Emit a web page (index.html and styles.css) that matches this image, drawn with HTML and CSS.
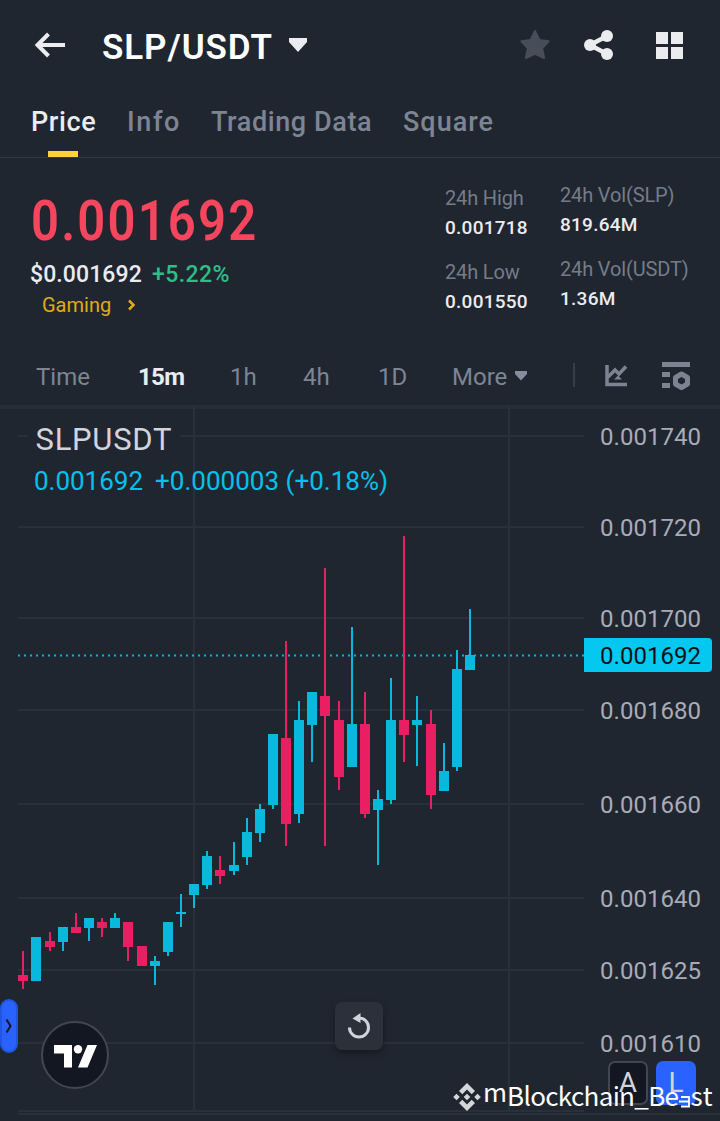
FILE: index.html
```
<!DOCTYPE html>
<html lang="en">
<head>
  <meta charset="UTF-8">
  <title>SLP/USDT</title>
  <link rel="stylesheet" href="styles.css">
</head>
<body>
  <header class="topbar">
    <svg class="back" width="32" height="26" viewBox="0 0 32 26">
      <path d="M31 13H4M14.5 2L3.5 13l11 11" fill="none" stroke="#eaecef" stroke-width="4"/>
    </svg>
    <h1>SLP/USDT</h1>
    <svg class="caret" width="20" height="16" viewBox="0 0 20 16"><path d="M1 1h18v4l-9 10L1 5z" fill="#eaecef"/></svg>
    <div class="actions">
      <svg width="32" height="32" viewBox="0 0 32 32">
        <path d="M16 2l4.4 9 9.2 1.2-6.5 7.1 2 9.7-9.1-4.2L6.900 29l2-9.700L2.400 12.200l9.200-1.200z" fill="#474d59" stroke="#474d59" stroke-width="2" stroke-linejoin="round"/>
      </svg>
      <svg class="share" width="32" height="32" viewBox="0 0 32 32">
        <path d="M24 7L7 16l17 9" fill="none" stroke="#eaecef" stroke-width="4.500"/>
        <circle cx="24" cy="7" r="6" fill="#eaecef"/>
        <circle cx="7" cy="16" r="6" fill="#eaecef"/>
        <circle cx="24" cy="25" r="6" fill="#eaecef"/>
      </svg>
      <svg width="32" height="32" viewBox="0 0 32 32">
        <path d="M3 3h12v12H3zM18 3h12v12H18zM3 18h12v12H3zM18 18h12v12H18z" fill="#eaecef"/>
      </svg>
    </div>
  </header>

  <nav class="tabs">
    <a class="tab active">Price</a>
    <a class="tab info">Info</a>
    <a class="tab trading">Trading Data</a>
    <a class="tab square">Square</a>
  </nav>

  <section class="ticker">
    <div class="price-box">
      <div class="price">0.001692</div>
      <div class="sub"><span class="usd">$0.001692</span><span class="change">+5.22%</span></div>
      <div class="tag">Gaming
        <svg width="9" height="12" viewBox="0 0 9 12"><path d="M2 1.500L6.500 6 2 10.500" fill="none" stroke="#e0ac10" stroke-width="2.500"/></svg>
      </div>
    </div>
    <div class="stats">
      <div class="label">24h High</div>
      <div class="value">0.001718</div>
      <div class="label second">24h Low</div>
      <div class="value">0.001550</div>
    </div>
    <div class="stats vol">
      <div class="label">24h Vol(SLP)</div>
      <div class="value">819.64M</div>
      <div class="label second">24h Vol(USDT)</div>
      <div class="value">1.36M</div>
    </div>
  </section>

  <div class="toolbar">
    <span class="i-time">Time</span>
    <span class="i-15m active">15m</span>
    <span class="i-1h">1h</span>
    <span class="i-4h">4h</span>
    <span class="i-1d">1D</span>
    <span class="i-more">More</span>
    <svg class="more-caret" width="14" height="11" viewBox="0 0 14 11"><path d="M1 1h12v3l-6 6.500L1 4z" fill="#848e9c"/></svg>
    <i class="divider"></i>
    <svg class="ico-chart" width="24" height="24" viewBox="0 0 24 24">
      <path d="M3 1v19.500h20M4 13l7-7 4 4 7-7.500" fill="none" stroke="#7c8492" stroke-width="3.500"/>
      <path d="M10 15.500l4-4 4 4z" fill="#7c8492"/>
    </svg>
    <svg class="ico-set" width="28" height="30" viewBox="0 0 28 30">
      <path d="M0 1h28v5H0zM0 11h8v5H0zM0 22h8v5H0z" fill="#7c8492"/>
      <path d="M19.500 13l6 3.500v6.500l-6 3.500-6-3.500v-6.500z" fill="none" stroke="#7c8492" stroke-width="5" stroke-linejoin="round"/>
    </svg>
  </div>

  <main class="chart">
    <svg class="plot" width="720" height="716" viewBox="0 405 720 716">
      <rect class="band" x="0" y="405" width="720" height="4"/>
      <path class="grid" d="M18 436h10M180 436h404M18 527h566M18 618h566M18 710h566M18 804h566M18 898h566M18 970h566M18 1043h566M18 1111h566M194 405v706M509 405v706"/>
      <path class="grid" d="M18 1114h702"/>
      <path class="last" d="M18 655.500h566"/>
      <g id="candles"></g>
      <g class="axis" id="axis"></g>
      <path d="M584 638h124q4 0 4 4v26q0 4-4 4H584z" fill="#04c8f0"/>
      <text class="now" x="600" y="664" textLength="101">0.001692</text>
      <text class="symbol" x="35.500" y="450" textLength="136">SLPUSDT</text>
      <text class="legend" x="34" y="490" textLength="109">0.001692</text>
      <text class="legend" x="155" y="490" textLength="233">+0.000003 (+0.18%)</text>
    </svg>

    <div class="drawer">
      <svg width="8" height="16" viewBox="0 0 8 16"><path d="M1.500 1.500l4 6.500-4 6.500" fill="none" stroke="#131722" stroke-width="2"/></svg>
    </div>
    <div class="tv">
      <svg width="43" height="23" viewBox="0 0 43 23">
        <path d="M0 0h18v22.500h-8V8.500H0zM33.500 0H43l-9.500 22.500h-9.500z" fill="#fff"/>
        <circle cx="24" cy="4.200" r="4.200" fill="#fff"/>
      </svg>
    </div>
    <div class="reset">
      <svg width="24" height="28" viewBox="0 0 24 28">
        <path d="M2.500 15.500a9.500 9.500 0 1 0 9.500-9.500" fill="none" stroke="#d1d4dc" stroke-width="3"/>
        <path d="M5.500 6.500L13.500 1v10z" fill="#d1d4dc"/>
      </svg>
    </div>
    <div class="scale auto">A</div>
    <div class="scale log">L</div>

    <svg class="watermark" width="270" height="51" viewBox="450 1070 270 51">
      <path d="M467 1083l8 8-3.300 3.300-4.700-4.700-4.700 4.700-3.300-3.300zM467 1111l8-8-3.300-3.300-4.700 4.700-4.700-4.700-3.300 3.300zM467 1093.700l3.300 3.300-3.300 3.300-3.300-3.300zM456.500 1093.700l3.300 3.300-3.300 3.300-3.300-3.300zM477.500 1093.700l3.300 3.300-3.300 3.300-3.300-3.300z" fill="#d5d6da"/>
      <text x="483" y="1101.500" textLength="23">m</text>
      <text x="507" y="1106" textLength="172">Blockchain_Be</text>
      <path d="M681 1097h8v9.500h-8M679 1101.500h10" fill="none" stroke="#fff" stroke-width="1.800"/>
      <text x="690.500" y="1106" textLength="22">st</text>
    </svg>
  </main>

  <script src="chart.js"></script>
</body>
</html>
```
FILE: chart.js
```
// left edge, wick top, body top, body bottom, wick bottom, direction
const candles = [
  [18, 951, 975, 981, 989, 'down'],
  [31, 937, 937, 981, 981, 'up'],
  [45, 932, 941, 947, 951, 'down'],
  [58, 927, 927, 942, 951, 'up'],
  [71, 913, 927, 933, 933, 'down'],
  [84, 918, 918, 928, 941, 'up'],
  [97, 918, 922, 928, 937, 'down'],
  [110, 913, 918, 928, 928, 'up'],
  [123, 922, 922, 947, 961, 'down'],
  [137, 946, 946, 966, 966, 'down'],
  [150, 956, 961, 966, 985, 'up'],
  [163, 922, 922, 952, 956, 'up'],
  [176, 894, 912, 914, 927, 'up'],
  [189, 884, 884, 895, 908, 'up'],
  [202, 851, 856, 885, 889, 'up'],
  [215, 856, 870, 876, 884, 'down'],
  [229, 842, 865, 871, 875, 'up'],
  [242, 818, 832, 857, 865, 'up'],
  [255, 804, 809, 833, 842, 'up'],
  [268, 734, 734, 805, 809, 'up'],
  [281, 641, 738, 824, 846, 'down'],
  [294, 701, 720, 814, 823, 'up'],
  [307, 692, 692, 725, 762, 'up'],
  [320, 568, 696, 716, 846, 'down'],
  [334, 701, 720, 777, 790, 'down'],
  [347, 627, 724, 767, 767, 'up'],
  [360, 692, 724, 814, 818, 'down'],
  [373, 790, 799, 810, 865, 'up'],
  [386, 678, 720, 800, 804, 'up'],
  [399, 536, 720, 735, 762, 'down'],
  [412, 696, 720, 725, 766, 'up'],
  [426, 710, 724, 795, 809, 'down'],
  [439, 743, 771, 791, 791, 'up'],
  [452, 650, 669, 767, 771, 'up'],
  [465, 609, 655, 670, 670, 'up']
];

document.getElementById('candles').innerHTML = candles.map(([x, high, top, bottom, low, dir]) =>
  `<path class="${dir}" d="M${x + 4} ${high}h2V${low}h-2zM${x} ${top}h10V${bottom}h-10z"/>`
).join('');

const prices = [
  ['0.001740', 437], ['0.001720', 528], ['0.001700', 619], ['0.001680', 711],
  ['0.001660', 805], ['0.001640', 899], ['0.001625', 971], ['0.001610', 1044]
];

document.getElementById('axis').innerHTML = prices.map(([price, y]) =>
  `<text x="600" y="${y + 8}" textLength="101">${price}</text>`
).join('');
```
FILE: styles.css
```
* {
  box-sizing: border-box;
}

body {
  margin: 0;
  width: 720px;
  height: 1121px;
  overflow: hidden;
  background: #202630;
  color: #eaecef;
  font-family: Roboto, "Liberation Sans", sans-serif;
}

svg {
  display: block;
  flex: none;
}

/* header */
.topbar {
  display: flex;
  align-items: center;
  height: 92px;
  padding: 0 35px 0 34px;
}

.back {
  margin-top: -2px;
}

h1 {
  width: 186px;
  margin: 3px 0 0 36px;
  font-size: 35px;
  font-weight: 600;
  letter-spacing: 0.9px;
  line-height: 40px;
  color: #fff;
}

.caret {
  margin-top: -2px;
}

.actions {
  display: flex;
  gap: 35px;
  margin: -2px 0 0 auto;
}

.share {
  margin: 0 3px 0 -3px;
}

.tabs {
  display: flex;
  height: 66px;
  padding-left: 31px;
  border-bottom: 1px solid #313842;
  font-size: 27px;
  font-weight: 500;
  line-height: 60px;
  letter-spacing: 0.6px;
  color: #7d8594;
}

.tab {
  position: relative;
  width: 96px;
  white-space: nowrap;
}

.tab.active {
  color: #eaecef;
}

.tab.active::after {
  content: "";
  position: absolute;
  left: 17px;
  bottom: 0;
  width: 30px;
  height: 6px;
  background: #fcd535;
}

.tab.info {
  width: 84px;
  letter-spacing: 1.6px;
}

.tab.trading {
  width: 192px;
}

.tab.square {
  letter-spacing: 1px;
}

/* price and 24h stats */
.ticker {
  display: flex;
  height: 187px;
  padding-left: 31px;
}

.price-box {
  width: 414px;
  padding-top: 33px;
}

.price {
  height: 60px;
  font-size: 56px;
  font-weight: 600;
  line-height: 60px;
  letter-spacing: 2.5px;
  color: #f6465d;
  transform: scaleX(0.875);
  transform-origin: left;
}

.sub {
  display: flex;
  margin-top: 9px;
  font-size: 23px;
  font-weight: 500;
  line-height: 30px;
}

.usd {
  width: 122px;
  margin-left: -1px;
  letter-spacing: 0.1px;
}

.change {
  letter-spacing: 0.4px;
  color: #2ebd85;
}

.tag {
  display: flex;
  align-items: center;
  gap: 16px;
  margin-left: 11px;
  font-size: 20px;
  line-height: 30px;
  color: #e0ac10;
}

.stats {
  width: 115px;
  padding-top: 26px;
  font-size: 20px;
  line-height: 29px;
  white-space: nowrap;
}

.vol {
  padding-top: 23px;
}

.label {
  letter-spacing: -0.15px;
  color: #747c8a;
}

.label.second {
  margin-top: 16px;
}

.value {
  font-weight: 500;
  font-size: 19px;
  letter-spacing: 0.25px;
}

/* intervals */
.toolbar {
  display: flex;
  align-items: center;
  height: 60px;
  padding: 4px 0 0 36px;
  font-size: 24px;
  color: #7d8594;
}

.toolbar .active {
  color: #eaecef;
  font-weight: 700;
  letter-spacing: -0.7px;
}

.i-time { width: 102px; }
.i-15m { width: 92px; }
.i-1h { width: 73px; }
.i-4h { width: 75px; }
.i-1d { width: 74px; }
.i-more { width: 62px; }

.divider {
  width: 2px;
  height: 24px;
  margin: -4px 29px 0 45px;
  background: #363d49;
}

.more-caret {
  margin-top: -4px;
}

.ico-chart {
  margin-top: -2px;
}

.ico-set {
  margin: -2px 0 0 34px;
}

/* chart */
.chart {
  position: relative;
  height: 716px;
}

.band {
  fill: #272d38;
}

.grid {
  fill: none;
  stroke: #2a303b;
  stroke-width: 2;
}

.last {
  stroke: #08b5d8;
  stroke-width: 2;
  stroke-dasharray: 2 4;
}

.up {
  fill: #08b8dd;
}

.down {
  fill: #ea1e63;
}

.axis,
.now {
  font-size: 24px;
  fill: #a9acb6;
}

.now {
  fill: #0c1116;
}

.symbol {
  font-size: 31px;
  fill: #d1d4dc;
}

.legend {
  font-size: 26px;
  fill: #04c1ea;
}

.drawer,
.tv,
.reset,
.scale {
  position: absolute;
  display: flex;
  align-items: center;
  justify-content: center;
}

.drawer {
  left: 0;
  top: 594px;
  width: 18px;
  height: 54px;
  border: 2px solid #1f55e0;
  border-radius: 9px;
  background: #2962ff;
}

.tv {
  left: 41px;
  top: 616px;
  width: 68px;
  height: 68px;
  padding-top: 3px;
  border: 2px solid #42464f;
  border-radius: 50%;
  background: #131722;
}

.reset {
  left: 335px;
  top: 597px;
  width: 48px;
  height: 48px;
  border-radius: 7px;
  background: #2c303b;
  box-shadow: 0 3px 6px rgba(0, 0, 0, 0.35);
}

.scale {
  top: 656px;
  width: 40px;
  height: 44px;
  border-radius: 7px;
  font-size: 28px;
  line-height: 42px;
  color: #d1d4dc;
}

.auto {
  left: 608px;
  border: 2px solid #42464f;
  background: #131722;
}

.log {
  left: 656px;
  background: #2962ff;
}

.watermark {
  position: absolute;
  left: 450px;
  top: 665px;
  font-family: "Noto Sans CJK SC", "Noto Sans", sans-serif;
  font-size: 26px;
  fill: #fff;
}
```
